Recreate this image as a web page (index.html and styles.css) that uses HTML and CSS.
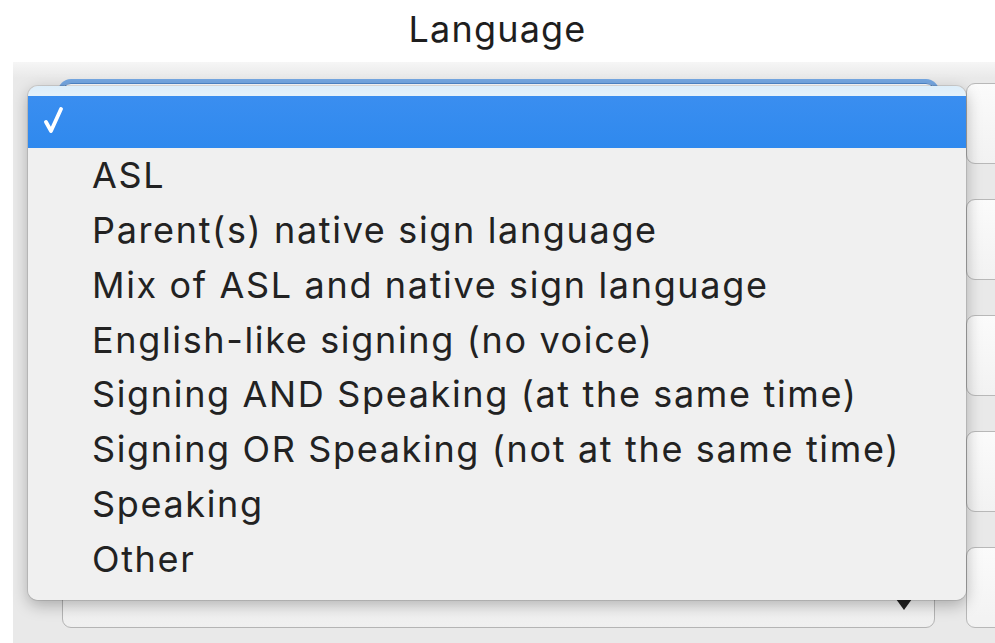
FILE: index.html
```html
<!DOCTYPE html>
<html>
<head>
<meta charset="utf-8">
<link rel="stylesheet" href="styles.css">
</head>
<body>
<div class="title">Language</div>
<div class="panel">
  <div class="row">
    <div class="select focused"></div>
    <div class="field"></div>
  </div>
  <div class="row">
    <div class="select"></div>
    <div class="field"></div>
  </div>
  <div class="row">
    <div class="select"></div>
    <div class="field"></div>
  </div>
  <div class="row">
    <div class="select"></div>
    <div class="field"></div>
  </div>
  <div class="row">
    <div class="select"><span class="arrow"></span></div>
    <div class="field"></div>
  </div>
</div>
<div class="menu">
  <div class="item selected">
    <svg class="check" width="20" height="28" viewBox="0 0 20 28"><path d="M3 16 L8 25 L18 3" fill="none" stroke="#fff" stroke-width="3.8" stroke-linecap="round" stroke-linejoin="round"/></svg>
  </div>
  <div class="item">ASL</div>
  <div class="item">Parent(s) native sign language</div>
  <div class="item">Mix of ASL and native sign language</div>
  <div class="item">English-like signing (no voice)</div>
  <div class="item">Signing AND Speaking (at the same time)</div>
  <div class="item">Signing OR Speaking (not at the same time)</div>
  <div class="item">Speaking</div>
  <div class="item">Other</div>
</div>
</body>
</html>
```
FILE: styles.css
```css
html, body {
  margin: 0;
  padding: 0;
  width: 995px;
  height: 643px;
  overflow: hidden;
  background: #ffffff;
  font-family: Inter, "Liberation Sans", Arial, sans-serif;
}
body {
  display: flex;
  flex-direction: column;
  position: relative;
}
.title {
  height: 58px;
  line-height: 59px;
  padding-bottom: 4px;
  text-align: center;
  font-size: 36px;
  letter-spacing: 1.2px;
  color: #1e1e1e;
}
.panel {
  margin-left: 13px;
  flex: 1;
  background: linear-gradient(#f6f6f6 0px, #e9e9e9 16px, #e9e9e9 100%);
  padding-top: 21px;
  display: flex;
  flex-direction: column;
  gap: 35px;
}
.row {
  height: 81px;
  display: flex;
  gap: 31px;
  padding-left: 49px;
}
.select {
  width: 871px;
  height: 79px;
  border: 1px solid #b4b4b4;
  border-radius: 9px;
  background: linear-gradient(#fdfdfd, #efefef);
  position: relative;
  flex: none;
}
.select.focused {
  box-shadow: 0 0 0 4px #74a7e2;
  border-color: #4f86c8;
}
.arrow {
  position: absolute;
  right: 22px;
  bottom: 17px;
  width: 0;
  height: 0;
  border-left: 8px solid transparent;
  border-right: 8px solid transparent;
  border-top: 11px solid #222;
}
.field {
  flex: none;
  width: 60px;
  height: 79px;
  border: 1px solid #b8b8b8;
  border-radius: 9px;
  background: linear-gradient(#fbfbfb, #f2f2f2);
}
.menu {
  position: absolute;
  left: 28px;
  top: 86px;
  width: 938px;
  height: 514px;
  box-sizing: border-box;
  padding-top: 10px;
  border-radius: 10px;
  background: linear-gradient(#ddeefa 0px, #e6f2fa 10px, #f0f0f0 10px);
  box-shadow: 0 0 0 1px rgba(0,0,0,0.10), 0 5px 16px rgba(0,0,0,0.28);
  overflow: hidden;
}
.item {
  height: 54.86px;
  line-height: 54.86px;
  padding-left: 64px;
  font-size: 36px;
  letter-spacing: 1.65px;
  color: #222222;
  white-space: nowrap;
}
.item.selected {
  height: 52px;
  background: linear-gradient(#3a8ef0, #2f89ee);
  position: relative;
}
.check {
  position: absolute;
  left: 15px;
  top: 10px;
}
```
